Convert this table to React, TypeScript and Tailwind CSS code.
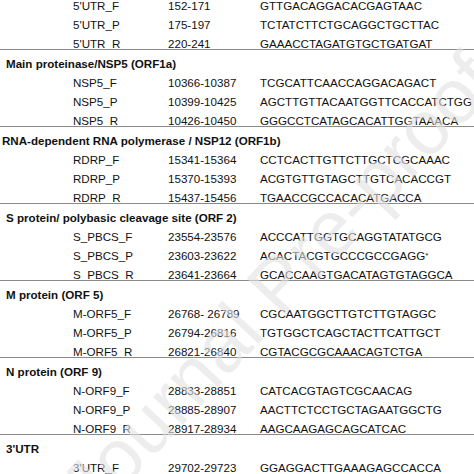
import React from "react";

type Row = [string, string, React.ReactNode];
type Section = { title?: string; indent?: string; rows: Row[] };

const sections: Section[] = [
  {
    rows: [
      ["5'UTR_F", "152-171", "GTTGACAGGACACGAGTAAC"],
      ["5'UTR_P", "175-197", "TCTATCTTCTGCAGGCTGCTTAC"],
      ["5'UTR_R", "220-241", "GAAACCTAGATGTGCTGATGAT"],
    ],
  },
  {
    title: "Main proteinase/NSP5 (ORF1a)",
    rows: [
      ["NSP5_F", "10366-10387", "TCGCATTCAACCAGGACAGACT"],
      ["NSP5_P", "10399-10425", "AGCTTGTTACAATGGTTCACCATCTGG"],
      ["NSP5_R", "10426-10450", "GGGCCTCATAGCACATTGGTAAACA"],
    ],
  },
  {
    title: "RNA-dependent RNA polymerase / NSP12 (ORF1b)",
    indent: "pl-[2px]",
    rows: [
      ["RDRP_F", "15341-15364", "CCTCACTTGTTCTTGCTCGCAAAC"],
      ["RDRP_P", "15370-15393", "ACGTGTTGTAGCTTGTCACACCGT"],
      ["RDRP_R", "15437-15456", "TGAACCGCCACACATGACCA"],
    ],
  },
  {
    title: "S protein/ polybasic cleavage site (ORF 2)",
    rows: [
      ["S_PBCS_F", "23554-23576", "ACCCATTGGTGCAGGTATATGCG"],
      [
        "S_PBCS_P",
        "23603-23622",
        <>
          ACACTACGTGCCCGCCGAGG
          <span className="relative top-[-2px] text-[8px]">*</span>
        </>,
      ],
      ["S_PBCS_R", "23641-23664", "GCACCAAGTGACATAGTGTAGGCA"],
    ],
  },
  {
    title: "M protein (ORF 5)",
    rows: [
      ["M-ORF5_F", "26768- 26789", "CGCAATGGCTTGTCTTGTAGGC"],
      ["M-ORF5_P", "26794-26816", "TGTGGCTCAGCTACTTCATTGCT"],
      ["M-ORF5_R", "26821-26840", "CGTACGCGCAAACAGTCTGA"],
    ],
  },
  {
    title: "N protein (ORF 9)",
    rows: [
      ["N-ORF9_F", "28833-28851", "CATCACGTAGTCGCAACAG"],
      ["N-ORF9_P", "28885-28907", "AACTTCTCCTGCTAGAATGGCTG"],
      ["N-ORF9_R", "28917-28934", "AAGCAAGAGCAGCATCAC"],
    ],
  },
  {
    title: "3'UTR",
    rows: [["3'UTR_F", "29702-29723", "GGAGGACTTGAAAGAGCCACCA"]],
  },
];

export default function App() {
  return (
    <div className="relative w-[474px] h-[474px] overflow-hidden bg-white text-[#111] font-['Liberation_Sans',Arial,sans-serif] text-[11.6px]">
      <div className="mt-[-8px] flex flex-col">
        {sections.map((s, i) => (
          <div key={i} className="flex flex-col">
            {s.title && <div className="h-px w-full bg-[#8a8a8a]" />}
            {s.title && (
              <div className={`h-[19px] pt-[6.5px] leading-[13px] whitespace-nowrap font-bold ${s.indent ?? "pl-[6px]"}`}>
                {s.title}
              </div>
            )}
            {s.rows.map((r, j) => (
              <div key={j} className="flex h-[19px] pt-[6.5px] leading-[13px] whitespace-nowrap pl-[73px]">
                <div className="w-[95px] shrink-0">{r[0]}</div>
                <div className="w-[92px] shrink-0">{r[1]}</div>
                <div className="shrink-0">{r[2]}</div>
              </div>
            ))}
          </div>
        ))}
      </div>
      <div className="pointer-events-none absolute left-[278px] top-[284px] -translate-x-1/2 -translate-y-1/2 -rotate-[47deg] whitespace-nowrap text-[77px] leading-none text-[rgba(225,225,225,0.6)]">
        Journal Pre-proof
      </div>
    </div>
  );
}
